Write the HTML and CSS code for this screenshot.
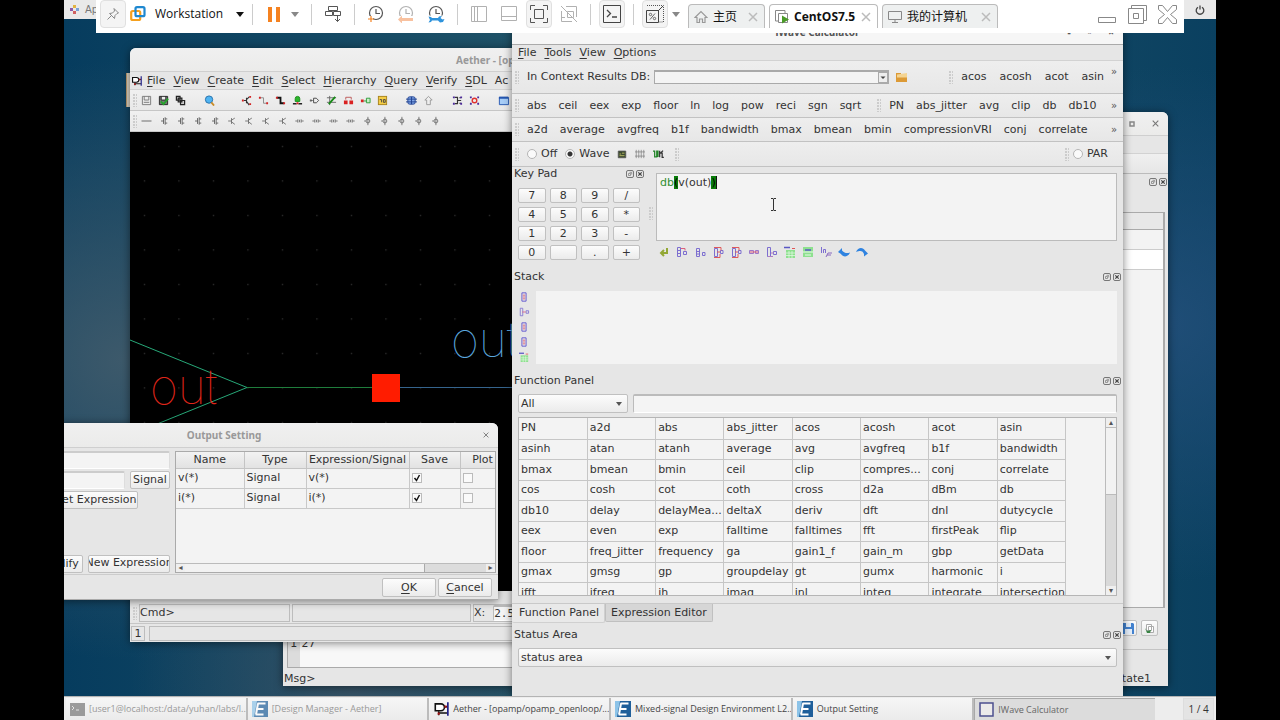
FILE: index.html
```
<!DOCTYPE html>
<html lang="en">
<head>
    <meta charset="UTF-8">
    <meta name="viewport" content="width=device-width, initial-scale=1.0">
    <title>CentOS7.5 - Workstation</title>
    <link rel="stylesheet" href="styles.css">
</head>
<body>
    <!-- shared icons -->
    <svg class="sprite" aria-hidden="true">
        <symbol id="caret" viewBox="0 0 8 5"><path d="M0 0h8L4 5z" fill="currentColor"/></symbol>
        <symbol id="float" viewBox="0 0 8 8"><rect x=".5" y=".5" width="7" height="7" rx="1.5" fill="none" stroke="#777"/><path d="M2.500 3.500h2v2h-2zM3.500 2.300h2.200v2.200" fill="none" stroke="#777" stroke-width=".7"/></symbol>
        <symbol id="shut" viewBox="0 0 8 8"><rect x=".5" y=".5" width="7" height="7" rx="1.5" fill="none" stroke="#777"/><path d="M2.300 2.300l3.400 3.400M5.700 2.300L2.300 5.700" stroke="#444" stroke-width="1.200"/></symbol>
        <symbol id="cross" viewBox="0 0 10 10"><path d="M1 1l8 8M9 1L1 9" stroke="currentColor" stroke-width="1.500"/></symbol>
        <symbol id="clock" viewBox="0 0 18 18"><circle cx="9" cy="8" r="6.500" fill="none" stroke="currentColor" stroke-width="1.200"/><path d="M9 4v4.500h4" fill="none" stroke="currentColor" stroke-width="1.200"/></symbol>
        <symbol id="aether" viewBox="0 0 14 12"><path d="M2 1.500h5a3 3 0 0 1 0 6H2z" fill="#fff" stroke="#111" stroke-width="1.400"/><path d="M10 4h3M5 9.500h8M5 8v3.500" stroke="#111" stroke-width="1.200"/><path d="M13 0v12" stroke="#22228a" stroke-width="1.500"/><path d="M10 3h2v2h-2zM4 9h2v2H4z" fill="#a31616"/></symbol>
        <symbol id="empyrean" viewBox="0 0 16 16"><rect width="16" height="16" fill="#1f5f9a"/><path d="M0 0h5L2 16H0z" fill="#8cc3e8"/><path d="M5.500 2.500h8M4.500 8h7M3.500 13.500h8M6 2.500l-2 11" stroke="#fff" stroke-width="2" fill="none"/></symbol>
        <symbol id="mos" viewBox="0 0 12 12"><path d="M3 6h3M6 2.500v7M8 1.500v9M8 3.500h2.500M8 8.500h2.500" fill="none" stroke="#555"/></symbol>
        <symbol id="bjt" viewBox="0 0 12 12"><path d="M2 6h4M6 2.500v7M6 5l4-2.500M6 7l4 3" fill="none" stroke="#666"/></symbol>
        <symbol id="res" viewBox="0 0 12 12"><path d="M1 6h3M8 6h3M4 4v4M6 4.500v3M8 4v4" stroke="#666" fill="none"/></symbol>
        <symbol id="src" viewBox="0 0 12 12"><circle cx="6.500" cy="6" r="2.300" fill="none" stroke="#666"/><path d="M6.500 1v10M2 6h2" stroke="#666"/></symbol>
        <symbol id="wire" viewBox="0 0 12 12"><path d="M2 3h4v6h4" fill="none" stroke="#888"/><path d="M1 2h2v2H1zM9 8h2v2H9z" fill="#d32222"/></symbol>
        <symbol id="stk1" viewBox="0 0 12 12"><path d="M1.500 1.500h3v9h-3zM2 4.500h2M2 7.500h2M7.500 5.500h3v3h-3z" fill="none" stroke="#7d6fd0"/><path d="M5 2.500h4v2" fill="none" stroke="#dc5f7c"/></symbol>
        <symbol id="stk2" viewBox="0 0 12 12"><path d="M2.500 2.500h3v8h-3zM3 5.500h2M3 8h2M8.500 6.500h2.500v3H8.500z" fill="none" stroke="#7d6fd0"/></symbol>
        <symbol id="stk3" viewBox="0 0 12 12"><path d="M2.500 2.500h3v8h-3zM8.500 4.500h2.500v3H8.500z" fill="none" stroke="#7d6fd0"/><path d="M2 1.500h7v3M2 11.500h6V8M5 6h3" fill="none" stroke="#df5a5a"/></symbol>
        <symbol id="stk4" viewBox="0 0 12 12"><path d="M3.500 1h5v10h-5z" fill="none" stroke="#6a5fd0" stroke-width="1.200"/><path d="M6 2.500v7M4.500 4.500h3M4.500 7.500h3" stroke="#e08090" fill="none"/></symbol>
        <symbol id="calc" viewBox="0 0 12 12"><path d="M2 4h9v8H2z" fill="#8ee08f"/><path d="M2 7h9M2 9.500h9M5 5v7M8 5v7" stroke="#e8fbe8" stroke-width=".7"/><path d="M0 1.500h6" stroke="#5a57c4" stroke-width="1.500"/><path d="M8 2.500h3" stroke="#e05555"/></symbol>
        <symbol id="home" viewBox="0 0 14 14"><path d="M1 7.500L7 1.500l6 6h-2v5H8.500V9h-3v3.500H3v-5z" fill="none" stroke="#999" stroke-width="1.200"/></symbol>
    </svg>

    <main class="desktop">
        <header class="gnome-bar">
            <span class="gnome-apps">
                <svg width="9" height="9" viewBox="0 0 9 9"><path d="M0 3h3v3H0z" fill="#8d5aa8"/><path d="M3 0h3v3H3z" fill="#e3b341"/><path d="M6 3h3v3H6z" fill="#7ba3d8"/><path d="M3 6h3v3H3z" fill="#d06060"/></svg>
                Ap
            </span>
            <svg width="10" height="10" viewBox="0 0 10 10"><path d="M3 2.200a3.800 3.800 0 1 0 4 0M5 .500v4" fill="none" stroke="#444" stroke-width="1.300"/></svg>
        </header>

        <!-- mixed-signal environment, mostly covered -->
        <section class="window mde">
            <div class="titlebar">
                <svg width="6" height="6" viewBox="0 0 6 6"><path d="M1 1h4v4H1z" fill="none" stroke="#888" stroke-width="1.500"/></svg>
                <svg class="muted" width="7" height="7"><use href="#cross"/></svg>
            </div>
            <div class="mde-menu"></div>
            <div class="mde-tools"></div>
            <div class="mde-main">
                <div class="mde-left">
                    <table class="mde-rows">
                        <tr><th>1</th><td>27</td></tr>
                        <tr><th></th><td></td></tr>
                    </table>
                </div>
                <div class="mde-right">
                    <div class="dock-buttons"><svg width="8" height="8"><use href="#float"/></svg><svg width="8" height="8"><use href="#shut"/></svg></div>
                    <div class="mde-list"><div class="list-head"></div><div class="list-row"></div><div class="list-row white"></div></div>
                    <div class="mde-actions">
                        <button aria-label="Save state"><svg width="11" height="11" viewBox="0 0 11 11"><path d="M0 0h10l1 1v10H0z" fill="#4382cf"/><path d="M3 0h5v4H3zM2 6h7v5H2z" fill="#e4eefa"/></svg></button>
                        <button aria-label="Load state"><svg width="11" height="11" viewBox="0 0 11 11"><path d="M2.500 1.500h5v6h-5zM4.500 3.500h5v6h-5z" fill="#fff" stroke="#aaa"/><path d="M1 5l2 3 4-1-1 3H3z" fill="#398345"/></svg></button>
                    </div>
                </div>
            </div>
            <footer class="mde-status"><span>Msg&gt;</span><span>state1</span></footer>
        </section>

        <div class="sliver"></div>

        <section class="window aether">
            <div class="titlebar"><span>Aether - [opamp</span></div>
            <nav class="menubar">
                <svg width="11" height="10"><use href="#aether"/></svg>
                <span><u>F</u>ile</span><span><u>V</u>iew</span><span><u>C</u>reate</span><span><u>E</u>dit</span><span><u>S</u>elect</span><span><u>H</u>ierarchy</span><span><u>Q</u>uery</span><span><u>V</u>erify</span><span><u>S</u>DL</span><span>Ac</span>
            </nav>
            <div class="toolbar">
                <i class="grip"></i>
                <div class="icons">
                    <svg viewBox="0 0 12 12"><path d="M1.500 1.500h9v9h-9zM3.500 1.500v4h5v-4M3 8h6" fill="none" stroke="#777"/></svg>
                    <svg viewBox="0 0 12 12"><path d="M1.500 1.500h9v9h-9zM3.500 1.500v4h5v-4" fill="#777" stroke="#222"/><path d="M3 7l3 3 5-6" fill="none" stroke="#25a32b" stroke-width="2"/></svg>
                    <svg viewBox="0 0 12 12"><path d="M1.500 1.500h4v4h-4zM3.500 3.500h4v4h-4zM6 6h4.500v4.500H6z" fill="#ccc" stroke="#222" stroke-width="1.300"/></svg>
                </div>
                <div class="icons">
                    <svg viewBox="0 0 12 12"><circle cx="5.500" cy="5" r="4" fill="#50b4f2" stroke="#236da8"/><path d="M8 8l3 3.500" stroke="#c98c28" stroke-width="2"/></svg>
                </div>
                <div class="icons wide">
                    <svg viewBox="0 0 12 12"><path d="M3 6h3M6 3v6M6 5l3-3M6 7l3 4" fill="none" stroke="#333" stroke-width="1.200"/><path d="M1 5h2v2H1zM9 1h2v2H9zM9 9h2v2H9z" fill="#d32222"/></svg>
                    <svg><use href="#wire"/></svg>
                    <svg viewBox="0 0 12 12"><path d="M2 3h4v6h4" fill="none" stroke="#111" stroke-width="2"/><path d="M1 2h2v2H1zM9 8h2v2H9z" fill="#d32222"/></svg>
                    <svg viewBox="0 0 12 12"><path d="M3.500 7V4a2.500 2.500 0 0 1 5 0v3z" fill="#2bb52b" stroke="#178a17"/><path d="M1 9.500h4M7 9.500h4" stroke="#222" stroke-width="1.500"/><path d="M5 8h2v2H5z" fill="#d22"/></svg>
                    <svg viewBox="0 0 12 12"><path d="M1 6h3M5 3.500h3l2.500 2.500L8 8.500H5z" fill="none" stroke="#444"/><path d="M1 5h2v2H1z" fill="#666"/></svg>
                    <svg viewBox="0 0 12 12"><path d="M1 3h10M1 8h10M4 1v10" stroke="#666"/><path d="M10 2L3 10" stroke="#178a17" stroke-width="2"/></svg>
                    <svg viewBox="0 0 12 12"><path d="M3 5V2.500h6V5" fill="none" stroke="#b55"/><path d="M1 6h4v4H1zM7 6h4v4H7z" fill="#d92121"/></svg>
                    <svg viewBox="0 0 12 12"><path d="M1 5h3v3H1z" fill="#d92121"/><path d="M4 6.500h3M7 3.500h4v5H7z" fill="#c9eec9" stroke="#2b9a37"/></svg>
                    <svg viewBox="0 0 12 12"><rect x="1.500" y="1.500" width="9" height="9" fill="#f5cd46" stroke="#a78218"/><path d="M3 5h2v3M7 5h2v3H7z" stroke="#444" fill="none"/></svg>
                </div>
                <div class="icons">
                    <svg viewBox="0 0 12 12"><rect x="2" y="2" width="8" height="8" rx="2" fill="#7fa5e6" stroke="#20418f"/><path d="M0 4.500h12M0 7.500h12M6 2v8" stroke="#20418f"/></svg>
                    <svg viewBox="0 0 12 12"><path d="M6 1.500l4 4H8v5H4v-5H2z" fill="#eee" stroke="#999"/></svg>
                </div>
                <div class="icons">
                    <svg viewBox="0 0 12 12"><path d="M3 2.500h3v7H3M6 6h4M8 3h2M8 9h2" fill="none" stroke="#333" stroke-width="1.300"/><path d="M1 1.500h2v2H1zM1 8.500h2v2H1zM9 1.500h2v2H9zM9 8.500h2v2H9z" fill="#4d2a9c"/></svg>
                    <svg viewBox="0 0 12 12"><circle cx="6" cy="6" r="2.500" fill="none" stroke="#e03030" stroke-width="1.500"/><path d="M1 1.500h2v2H1zM1 8.500h2v2H1zM9 1.500h2v2H9zM9 8.500h2v2H9z" fill="#4d2a9c"/></svg>
                </div>
                <div class="icons">
                    <svg viewBox="0 0 12 12"><path d="M1.500 2.500h10v8h-10z" fill="#a7cdf7" stroke="#2456b0"/><path d="M1 3h10" stroke="#2456b0" stroke-width="2"/></svg>
                </div>
            </div>
            <div class="toolbar devices">
                <i class="grip"></i>
                <div class="icons">
                    <svg viewBox="0 0 12 12"><path d="M0 6h12" stroke="#555"/></svg>
                    <svg><use href="#mos"/></svg><svg><use href="#mos"/></svg><svg><use href="#mos"/></svg><svg><use href="#mos"/></svg>
                    <svg><use href="#bjt"/></svg><svg><use href="#bjt"/></svg><svg><use href="#bjt"/></svg><svg><use href="#bjt"/></svg>
                    <svg><use href="#res"/></svg><svg><use href="#res"/></svg><svg><use href="#res"/></svg><svg><use href="#res"/></svg>
                    <svg><use href="#src"/></svg><svg><use href="#src"/></svg><svg><use href="#src"/></svg><svg><use href="#src"/></svg><svg><use href="#src"/></svg>
                </div>
            </div>
            <svg class="schematic">
                <defs>
                    <pattern id="dots" width="34.5" height="34.5" patternUnits="userSpaceOnUse"><rect x="14" y="14" width="1" height="1" fill="#555"/></pattern>
                </defs>
                <rect width="100%" height="100%" fill="url(#dots)"/>
                <path d="M0 208L117 255.500L0 303" fill="none" stroke="#27a878"/>
                <path d="M117 255.500h126" stroke="#1f7d3c"/>
                <path d="M270 255.500h200" stroke="#35648d"/>
                <rect x="242" y="242" width="28" height="28" fill="#ff1c00"/>
                <text x="20" y="272" fill="#e0261a">out</text>
                <text x="321" y="225" fill="#5aa5dc">out</text>
            </svg>
            <div class="cmd-row">
                <i class="grip"></i>
                <div class="cell cmd">Cmd&gt;</div>
                <div class="cell info"></div>
                <div class="cell coords"><label for="coordX">X:</label><input id="coordX" type="text" value="2.5"></div>
            </div>
            <div class="state-row"><div class="cell num">1</div><div class="cell rest"></div></div>
        </section>

        <section class="window output">
            <div class="titlebar"><span>Output Setting</span><svg class="muted" width="6" height="6"><use href="#cross"/></svg></div>
            <div class="output-body">
                <form class="output-form">
                    <input type="text" aria-label="Output name">
                    <div class="form-line"><input type="text" aria-label="Output signal"><button type="button" class="btn signal">Signal</button></div>
                    <button type="button" class="btn get">Get Expression</button>
                    <div class="form-line last"><button type="button" class="btn modify">Modify</button><button type="button" class="btn new"><span>New Expression</span></button></div>
                </form>
                <div class="output-list">
                    <table>
                        <colgroup><col class="c-name"><col class="c-type"><col class="c-expr"><col class="c-save"><col class="c-plot"></colgroup>
                        <tr><th>Name</th><th>Type</th><th>Expression/Signal</th><th>Save</th><th>Plot</th></tr>
                        <tr><td>v(*)</td><td>Signal</td><td>v(*)</td><td><input type="checkbox" aria-label="Save v(*)" checked></td><td><input type="checkbox" aria-label="Plot v(*)"></td></tr>
                        <tr><td>i(*)</td><td>Signal</td><td>i(*)</td><td><input type="checkbox" aria-label="Save i(*)" checked></td><td><input type="checkbox" aria-label="Plot i(*)"></td></tr>
                    </table>
                    <div class="hscroll"><b>◂</b><i></i><b>▸</b></div>
                </div>
            </div>
            <div class="output-actions"><button class="btn"><u>O</u>K</button><button class="btn"><u>C</u>ancel</button></div>
        </section>

        <section class="window iwave">
            <div class="titlebar"><span>iWave Calculator</span><div class="win-buttons"><i>-</i><i>▫</i><i>×</i></div></div>
            <nav class="menubar"><span><u>F</u>ile</span><span><u>T</u>ools</span><span><u>V</u>iew</span><span><u>O</u>ptions</span></nav>

            <div class="bar bar-db">
                <i class="grip"></i>
                <label for="resultsDb">In Context Results DB:</label>
                <select id="resultsDb"><option></option></select>
                <svg width="11" height="10" viewBox="0 0 11 10"><path d="M0 1h5v1h6v8H0z" fill="#dc9a36"/><path d="M1 2.500l10-1.500v4.500H1z" fill="#f4d492"/></svg>
                <i class="grip far"></i>
                <div class="fns"><span>acos</span><span>acosh</span><span>acot</span><span>asin</span></div>
                <b class="more up">»</b>
            </div>
            <div class="bar bar-math">
                <i class="grip"></i>
                <div class="fns"><span>abs</span><span>ceil</span><span>eex</span><span>exp</span><span>floor</span><span>ln</span><span>log</span><span>pow</span><span>reci</span><span>sgn</span><span>sqrt</span></div>
                <i class="grip"></i>
                <div class="fns"><span>PN</span><span>abs_jitter</span><span>avg</span><span>clip</span><span>db</span><span>db10</span></div>
                <b class="more">»</b>
            </div>
            <div class="bar bar-math">
                <i class="grip"></i>
                <div class="fns"><span>a2d</span><span>average</span><span>avgfreq</span><span>b1f</span><span>bandwidth</span><span>bmax</span><span>bmean</span><span>bmin</span><span>compressionVRI</span><span>conj</span><span>correlate</span></div>
                <b class="more">»</b>
            </div>
            <div class="bar bar-mode">
                <i class="grip"></i>
                <label><input type="radio" name="mode">Off</label>
                <label><input type="radio" name="mode" checked>Wave</label>
                <div class="icons mode-icons">
                    <svg viewBox="0 0 12 12"><path d="M1.500 2.500h9v8h-9z" fill="#3b4a30" stroke="#555"/><path d="M3 6h2M6 5h3M3 8h6" stroke="#c9c66b"/></svg>
                    <svg viewBox="0 0 12 12"><path d="M0 3.500h12M0 8.500h12M1.500 1v10M4.500 1v10M7.500 1v10M10.500 1v10" stroke="#777" stroke-width=".8"/></svg>
                    <svg viewBox="0 0 12 12"><path d="M0 2.500h2v7h2.500v-7H6v7" fill="none" stroke="#24852a" stroke-width="1.500"/><path d="M8 2v8M12 2l-3 3h2v5h2" fill="none" stroke="#333" stroke-width="1.500"/></svg>
                </div>
                <i class="grip"></i>
                <span class="grow"></span>
                <i class="grip"></i>
                <label><input type="radio" name="par">PAR</label>
            </div>

            <div class="calc-main">
                <div class="keypad">
                    <div class="dock-title"><span>Key Pad</span><svg width="8" height="8"><use href="#float"/></svg><svg width="8" height="8"><use href="#shut"/></svg></div>
                    <div class="keys">
                        <button>7</button><button>8</button><button>9</button><button>/</button>
                        <button>4</button><button>5</button><button>6</button><button>*</button>
                        <button>1</button><button>2</button><button>3</button><button>-</button>
                        <button>0</button><button aria-label="blank"></button><button>.</button><button>+</button>
                    </div>
                </div>
                <i class="grip splitter"></i>
                <div class="editor">
                    <div class="expression" role="textbox" contenteditable="true" aria-label="Expression" spellcheck="false"><span class="fn">db</span><span class="paren">(</span>v(out)<span class="paren caret-end">)</span></div>
                    <svg class="ibeam" width="7" height="13" viewBox="0 0 7 13"><path d="M1 .500h2l.5.500.5-.500h2M3.500 1v11M1 12.500h2l.5-.500.5.500h2" fill="none" stroke="#333"/></svg>
                    <div class="icons edit-icons">
                        <svg viewBox="0 0 12 12"><path d="M9 2v5H4M6 4L3 7l3 3" fill="none" stroke="#93a835" stroke-width="2"/></svg>
                        <svg><use href="#stk1"/></svg>
                        <svg><use href="#stk2"/></svg>
                        <svg><use href="#stk3"/></svg>
                        <svg><use href="#stk3"/></svg>
                        <svg viewBox="0 0 12 12"><path d="M1.500 4.500h4v3h-4zM7.500 4.500h3v3h-3z" fill="none" stroke="#9c7ac9"/><path d="M2 6h8" stroke="#dc5f7c"/></svg>
                        <svg viewBox="0 0 12 12"><path d="M1.500 1.500h3v9h-3zM7.500 5.500h3v3h-3z" fill="none" stroke="#7d6fd0"/><path d="M2 10.500h5M5 7h3" stroke="#b07cc0"/></svg>
                        <svg><use href="#calc"/></svg>
                        <svg viewBox="0 0 12 12"><path d="M1 1h10v10H1z" fill="#8ee08f"/><path d="M1 6h10M3 9h6" stroke="#e8fbe8"/><path d="M3 4h6" stroke="#5a57c4" stroke-width="1.500"/></svg>
                        <svg viewBox="0 0 12 12"><path d="M1.500 1v6M3.500 7V3.500h2V7" fill="none" stroke="#7d6fd0"/><path d="M6 11l2-4h4M7 9h4" stroke="#8a6ac0" fill="none"/></svg>
                        <svg viewBox="0 0 12 12"><path d="M0 6l4-4v2.500c3 3 5 3 8 2-2 5-7 5-9 1.500z" fill="#2f83e0"/></svg>
                        <svg viewBox="0 0 12 12"><path d="M12 7.500l-4 3V8C6 4 4 5 0 6c2-5 7-5 9-1.500z" fill="#2f83e0"/></svg>
                    </div>
                </div>
            </div>

            <div class="dock-title stack-title"><span>Stack</span><svg width="8" height="8"><use href="#float"/></svg><svg width="8" height="8"><use href="#shut"/></svg></div>
            <div class="stack">
                <div class="stack-icons">
                    <svg><use href="#stk4"/></svg>
                    <svg viewBox="0 0 12 12"><path d="M1.500 1.500h3v9h-3zM8.500 4.500h3v3h-3z" fill="none" stroke="#7d6fd0"/><path d="M4 6h4" stroke="#dc5f7c"/></svg>
                    <svg><use href="#stk4"/></svg>
                    <svg><use href="#stk4"/></svg>
                    <svg><use href="#calc"/></svg>
                </div>
                <div class="stack-list"></div>
            </div>

            <div class="dock-title fn-title"><span>Function Panel</span><svg width="8" height="8"><use href="#float"/></svg><svg width="8" height="8"><use href="#shut"/></svg></div>
            <div class="fn-filter">
                <select class="combo" aria-label="Category"><option>All</option></select>
                <input type="text" aria-label="Filter functions">
            </div>
            <div class="fn-panel">
                <div class="fn-scroll">
                    <table>
                        <tr><td>PN</td><td>a2d</td><td>abs</td><td>abs_jitter</td><td>acos</td><td>acosh</td><td>acot</td><td>asin</td></tr>
                        <tr><td>asinh</td><td>atan</td><td>atanh</td><td>average</td><td>avg</td><td>avgfreq</td><td>b1f</td><td>bandwidth</td></tr>
                        <tr><td>bmax</td><td>bmean</td><td>bmin</td><td>ceil</td><td>clip</td><td>compres...</td><td>conj</td><td>correlate</td></tr>
                        <tr><td>cos</td><td>cosh</td><td>cot</td><td>coth</td><td>cross</td><td>d2a</td><td>dBm</td><td>db</td></tr>
                        <tr><td>db10</td><td>delay</td><td>delayMea...</td><td>deltaX</td><td>deriv</td><td>dft</td><td>dnl</td><td>dutycycle</td></tr>
                        <tr><td>eex</td><td>even</td><td>exp</td><td>falltime</td><td>falltimes</td><td>fft</td><td>firstPeak</td><td>flip</td></tr>
                        <tr><td>floor</td><td>freq_jitter</td><td>frequency</td><td>ga</td><td>gain1_f</td><td>gain_m</td><td>gbp</td><td>getData</td></tr>
                        <tr><td>gmax</td><td>gmsg</td><td>gp</td><td>groupdelay</td><td>gt</td><td>gumx</td><td>harmonic</td><td>i</td></tr>
                        <tr><td>ifft</td><td>ifreq</td><td>ih</td><td>imag</td><td>inl</td><td>integ</td><td>integrate</td><td>intersection</td></tr>
                    </table>
                </div>
                <div class="vscroll"><b>▴</b><i></i><b>▾</b></div>
            </div>
            <div class="tabs"><button class="active">Function Panel</button><button>Expression Editor</button></div>

            <div class="dock-title status-title"><span>Status Area</span><svg width="8" height="8"><use href="#float"/></svg><svg width="8" height="8"><use href="#shut"/></svg></div>
            <div class="status-area"><select class="combo" aria-label="Status"><option>status area</option></select></div>
        </section>

        <!-- full screen toolbar of the host -->
        <header class="vm-bar">
            <button class="tool on" aria-label="Pin"><svg width="14" height="14" viewBox="0 0 14 14"><path d="M8 1.500l4.500 4.500-1.500.500-2 2-.500 3-5-5 3-.500 2-2zM5.500 8.500L1.500 12.500" fill="none" stroke="#888"/></svg></button>
            <svg class="vm-logo" viewBox="0 0 16 16"><rect x="1.200" y="5" width="9" height="9" rx="1.500" fill="none" stroke="#f5a01d" stroke-width="2.200"/><rect x="5.500" y="1.200" width="9" height="9" rx="1.500" fill="none" stroke="#1e88d0" stroke-width="2.200"/></svg>
            <button class="vm-name">Workstation<svg width="8" height="5"><use href="#caret"/></svg></button>
            <i class="sep"></i>
            <button class="tool" aria-label="Suspend"><svg width="12" height="15" viewBox="0 0 12 15"><path d="M0 0h4v15H0zM8 0h4v15H8z" fill="#f58220"/></svg></button>
            <span class="drop"><svg width="8" height="5"><use href="#caret"/></svg></span>
            <i class="sep"></i>
            <button class="tool" aria-label="Send keys"><svg width="18" height="18" viewBox="0 0 18 18"><path d="M4.500 1.500h9v4h-9zM1.500 6.500h7v4h-7zM9.500 6.500h7v4h-7zM13.500 10.500v6M11 14l2.500 2.500L16 14" fill="none" stroke="#555"/></svg></button>
            <i class="sep"></i>
            <button class="tool" aria-label="Take snapshot"><svg width="18" height="18" viewBox="0 0 18 18"><use href="#clock"/><path d="M0 11h6v7H0z" fill="#fff"/><path d="M4 11v6M1 14h6" stroke="#f58220" stroke-width="1.200"/></svg></button>
            <button class="tool" aria-label="Revert snapshot"><svg class="faded" width="18" height="18" viewBox="0 0 18 18"><use href="#clock"/><path d="M2 11h15v6H2z" fill="#fff"/><path d="M5 10.500v2.500h11v3H5v2.500l-4-4z" fill="#f0772c"/></svg></button>
            <button class="tool" aria-label="Manage snapshots"><svg width="18" height="18" viewBox="0 0 18 18"><use href="#clock"/><path d="M1 10.500h16V18H1z" fill="#fff"/><path d="M1.500 11.500l2.500.500 1 1h6l1-1.500 3-.500-1.500 2 2 1.500 2-.500-1.500 3-3 .500-2-2H5l-1 1.500-2.500.500 1.500-2.500z" fill="#2e93dc"/></svg></button>
            <i class="sep"></i>
            <button class="tool" aria-label="Library"><svg class="faded" width="16" height="16" viewBox="0 0 16 16"><path d="M.500.500h15v15H.500zM6.500.500v15M3.500.500v15" fill="none" stroke="currentColor"/></svg></button>
            <button class="tool" aria-label="Thumbnails"><svg class="faded" width="16" height="16" viewBox="0 0 16 16"><path d="M.500.500h15v14H.500zM.500 10.500h15" fill="none" stroke="currentColor"/></svg></button>
            <button class="tool on" aria-label="Full screen"><svg width="18" height="18" viewBox="0 0 18 18"><path d="M4.500 4.500h9v9h-9zM.500 5V.500H5M13 .500h4.500V5M17.500 13v4.500H13M5 17.500H.500V13" fill="none" stroke="#555"/></svg></button>
            <button class="tool" aria-label="Unity"><svg class="faded" width="16" height="16" viewBox="0 0 16 16"><path d="M5 .500h10.500V11M.500 5v10.500H11M4 11.500H.500M6.500 5.500h6v6h-6zM0 0l16 16" fill="none" stroke="currentColor"/></svg></button>
            <i class="sep"></i>
            <button class="tool on" aria-label="Console view"><svg width="18" height="18" viewBox="0 0 18 18"><path d="M.500.500h17v17H.500z" fill="none" stroke="#444"/><path d="M4 5l3.500 3.500L4 12M9 12h5" fill="none" stroke="#444" stroke-width="1.300"/></svg></button>
            <i class="sep"></i>
            <button class="tool on" aria-label="Stretch guest"><svg width="18" height="18" viewBox="0 0 18 18"><path d="M.500 5.500h12v12H.500z" fill="none" stroke="#444"/><path d="M1 .500h16.500V17H13" fill="none" stroke="#555" stroke-dasharray="1 1"/><path d="M12 6l5-5" stroke="#444"/><circle cx="4.500" cy="9.500" r="1.200" fill="none" stroke="#666"/><circle cx="8.500" cy="13.500" r="1.200" fill="none" stroke="#666"/><path d="M9 8.500l-5 6" stroke="#666"/></svg></button>
            <span class="drop"><svg width="8" height="5"><use href="#caret"/></svg></span>
            <div class="vm-tabs">
                <button class="vm-tab"><svg width="14" height="14"><use href="#home"/></svg><span lang="zh">主页</span><svg class="x" width="10" height="10"><use href="#cross"/></svg></button>
                <button class="vm-tab current"><svg width="14" height="14" viewBox="0 0 14 14"><path d="M3.500 11H.500V.500H10V3M3.500 3.500h9v9h-9z" fill="none" stroke="#888"/><path d="M7 5.500l7 4-7 4z" fill="#4a9a28"/></svg><span>CentOS7.5</span><svg class="x" width="10" height="10"><use href="#cross"/></svg></button>
                <button class="vm-tab"><svg width="14" height="12" viewBox="0 0 14 12"><path d="M.500.500h13v8H.500zM7 9v2M4 11.500h6" fill="none" stroke="#888"/></svg><span lang="zh">我的计算机</span><svg class="x" width="10" height="10"><use href="#cross"/></svg></button>
            </div>
            <div class="vm-window">
                <button aria-label="Minimize"><svg width="19" height="19" viewBox="0 0 19 19"><path d="M.500 12.500h17v5H.500z" fill="none" stroke="#888"/></svg></button>
                <button aria-label="Restore"><svg width="19" height="19" viewBox="0 0 19 19"><path d="M3.500 3V.500h15v15H16M.500 3.500h15v15H.500zM5.500 8.500h5v5h-5z" fill="none" stroke="#888"/></svg></button>
                <button aria-label="Close"><svg width="19" height="19" viewBox="0 0 19 19"><path d="M.500.500h4l5 6 5-6h4v4l-6 5 6 5v4h-4l-5-6-5 6h-4v-4l6-5-6-5z" fill="none" stroke="#888"/></svg></button>
            </div>
        </header>

        <footer class="taskbar">
            <button class="task dim"><svg width="15" height="13" viewBox="0 0 15 13"><path d="M0 0h15v13H0z" fill="#777"/><path d="M2 3l2 2-2 2M6 7h3" fill="none" stroke="#ddd"/></svg>[user1@localhost:/data/yuhan/labs/l...</button>
            <button class="task dim"><svg width="16" height="16"><use href="#empyrean"/></svg>[Design Manager - Aether]</button>
            <button class="task"><svg width="16" height="14"><use href="#aether"/></svg>Aether - [opamp/opamp_openloop/...</button>
            <button class="task"><svg width="16" height="16"><use href="#empyrean"/></svg>Mixed-signal Design Environment L2...</button>
            <button class="task"><svg width="16" height="16"><use href="#empyrean"/></svg>Output Setting</button>
            <button class="task pressed"><svg width="15" height="15" viewBox="0 0 15 15"><rect x="1" y="1" width="13" height="13" fill="#eceaea" stroke="#4c4f8e" stroke-width="1.500"/></svg>IWave Calculator</button>
            <span class="pager">1 / 4</span>
        </footer>
    </main>
</body>
</html>
```
FILE: styles.css
```
* {
    box-sizing: border-box;
}

body {
    margin: 0;
    padding: 0 5%;
    height: 100vh;
    overflow: hidden;
    background: #000;
    color: #333;
    font-family: "DejaVu Sans", sans-serif;
    font-size: 11px;
    line-height: 14px;
}

button, input, select {
    font: inherit;
    color: inherit;
    margin: 0;
    padding: 0;
}

i {
    font-style: normal;
}

svg {
    flex: none;
}

u {
    text-underline-offset: 2px;
}

.sprite {
    position: absolute;
    width: 0;
    height: 0;
}

.desktop {
    position: relative;
    height: 100%;
    overflow: hidden;
    background:
        radial-gradient(circle at 5% 50%, rgba(66, 92, 108, 0.9), transparent 26%),
        radial-gradient(circle at 25% 95%, rgba(66, 84, 100, 0.7), transparent 20%),
        radial-gradient(circle at 96% 45%, rgba(36, 80, 124, 0.8), transparent 22%),
        linear-gradient(90deg, #063c5e, #26586a 50%, #0a4060);
}

/* guest desktop bars */

.gnome-bar {
    display: flex;
    align-items: center;
    justify-content: space-between;
    height: 19px;
    padding: 0 11px 0 6px;
    background: #e9e9e9;
    color: #777;
    font-size: 10px;
}

.gnome-apps {
    display: flex;
    align-items: center;
    gap: 6px;
}

.taskbar {
    position: absolute;
    left: 0;
    right: 0;
    bottom: 0;
    display: flex;
    height: 24px;
    padding: 1px 2px 0;
    border-top: 1px solid #b4b4b4;
    background: #ededed;
    font-family: "Open Sans", sans-serif;
    font-size: 9px;
}

.task {
    flex: 1;
    display: flex;
    align-items: center;
    gap: 4px;
    min-width: 0;
    padding-left: 4px;
    overflow: hidden;
    white-space: nowrap;
    border: 0;
    border-right: 2px solid #bcbcbc;
    background: linear-gradient(#f6f6f6, #ebebeb);
    color: #444;
}

.task.dim {
    color: #999;
}

.task.dim svg {
    opacity: 0.7;
}

.task.pressed {
    border: 1px solid #a8a8a8;
    border-width: 1px 0 0 1px;
    background: #dcdcdc;
    color: #666;
}

.pager {
    width: 31px;
    margin-left: 28px;
    border: 1px solid #ddd;
    background: #e4e4e4;
    font-size: 10px;
    line-height: 20px;
    text-align: center;
}

/* windows */

.window {
    position: absolute;
    display: flex;
    flex-direction: column;
    overflow: hidden;
    border-radius: 6px 6px 0 0;
    background: #e6e6e6;
    box-shadow: 0 1px 8px rgba(0, 0, 0, 0.5);
}

.titlebar {
    display: flex;
    align-items: center;
    justify-content: center;
    height: 24px;
    flex: none;
    border-bottom: 1px solid #cfcfcf;
    background: linear-gradient(#f0f0f0, #ebebea);
    color: #999;
    font-family: "Noto Sans", sans-serif;
    font-size: 10px;
    font-weight: bold;
}

.muted {
    color: #777;
}

.menubar {
    display: flex;
    align-items: center;
    gap: 8px;
    flex: none;
    border-bottom: 1px solid #d2d2d2;
}

.grip {
    width: 4px;
    height: 13px;
    flex: none;
    background: radial-gradient(circle at 1px 1px, #ccc 1px, transparent 1px);
    background-size: 3px 3px;
}

.icons {
    display: flex;
    flex: none;
}

.icons svg {
    width: 17px;
    height: 11px;
}

.btn, .keys button, .combo, .mde-actions button {
    border: 1px solid #c0c0c0;
    border-radius: 2px;
    background: linear-gradient(#fcfcfc, #ebebeb);
}

input[type="text"] {
    border: 1px solid #bbb;
    border-top-width: 2px;
    border-bottom-color: #fff;
    border-radius: 2px;
    background: #f4f4f4;
}

.dock-title {
    display: flex;
    align-items: center;
    gap: 2px;
    flex: none;
    height: 14px;
    padding: 0 2px;
}

.dock-title span {
    flex: 1;
}

/* mixed-signal environment */

.mde {
    left: 219px;
    right: 48px;
    top: 112px;
    bottom: 34px;
}

.mde .titlebar {
    justify-content: flex-end;
    gap: 17px;
    padding-right: 9px;
}

.mde-menu {
    height: 18px;
    border-bottom: 1px solid #d2d2d2;
}

.mde-tools {
    height: 20px;
    border-bottom: 1px solid #bbb;
    background: linear-gradient(#f0f0f0, #e6e6e6);
}

.mde-main {
    flex: 1;
    display: flex;
}

.mde-left {
    flex: 1;
    display: flex;
    flex-direction: column;
    justify-content: flex-end;
    padding: 0 3px 0 4px;
}

.mde-rows {
    width: 100%;
    border: 1px solid #aaa;
    border-collapse: collapse;
    background: #f8f8f8;
    text-align: left;
}

.mde-rows th {
    width: 12px;
    padding: 0;
    background: #dcdcdc;
    font-weight: normal;
    text-align: center;
}

.mde-rows td {
    height: 16px;
    padding: 0 2px;
}

.mde-right {
    width: 180px;
    display: flex;
    flex-direction: column;
    margin-bottom: 18px;
    border-bottom: 1px solid #c4c4c4;
}

.dock-buttons {
    display: flex;
    justify-content: flex-end;
    gap: 2px;
    padding: 4px 1px 26px;
}

.mde-list {
    flex: 1;
    margin-right: 3px;
    border: 1px solid #aaa;
    border-width: 1px 2px 1px 1px;
    background: #f3f3f3;
}

.list-head {
    height: 17px;
    border-bottom: 1px solid #aaa;
    background: #e8e8e8;
}

.list-row {
    height: 20px;
    border-bottom: 1px solid #ccc;
}

.list-row.white {
    background: #fff;
}

.mde-actions {
    display: flex;
    justify-content: flex-end;
    gap: 4px;
    padding: 12px 10px 13px;
}

.mde-actions button {
    display: grid;
    place-items: center;
    width: 17px;
    height: 16px;
}

.mde-status {
    display: flex;
    justify-content: space-between;
    height: 18px;
    padding: 4px 17px 0 1px;
}

.sliver {
    position: absolute;
    left: 62px;
    top: 73px;
    width: 5px;
    height: 34px;
    border-left: 1px solid #b9986c;
    background: #d8d0c0;
}

/* schematic editor */

.aether {
    left: 66px;
    right: 640px;
    top: 48px;
    bottom: 78px;
}

.aether .titlebar {
    justify-content: flex-start;
    padding-left: 326px;
    white-space: nowrap;
}

.aether .menubar {
    height: 18px;
    padding-left: 1px;
    white-space: nowrap;
}

.aether .menubar svg {
    margin-right: -3px;
}

.toolbar {
    display: flex;
    align-items: center;
    gap: 12px;
    height: 21px;
    flex: none;
    padding-left: 3px;
    border-bottom: 1px solid #c6c6c6;
    background: linear-gradient(#f0f0f0, #e8e8e8);
}

.toolbar .grip {
    margin-right: -11px;
}

.toolbar .wide {
    margin-left: 8px;
}

.devices .icons svg {
    height: 10px;
}

.schematic {
    flex: 1;
    width: 100%;
    min-height: 0;
    background: #000;
    font-family: Inter, sans-serif;
    font-size: 48px;
    font-weight: 100;
}

.cell {
    border: 1px solid #bdbdbd;
    height: 18px;
    line-height: 16px;
}

.cmd-row {
    display: flex;
    align-items: center;
    gap: 2px;
    flex: none;
    height: 33px;
    padding: 12px 0 0 3px;
    border-bottom: 1px solid #c6c6c6;
}

.cmd {
    width: 151px;
}

.info {
    width: 179px;
}

.coords {
    display: flex;
    flex: 1;
    gap: 8px;
}

.coords input {
    width: 60px;
    font-family: "DejaVu Sans Mono", monospace;
}

.state-row {
    display: flex;
    gap: 4px;
    flex: none;
    padding: 2px 1px 1px;
}

.state-row .cell {
    height: 15px;
    line-height: 14px;
    text-align: center;
}

.num {
    width: 14px;
}

.rest {
    flex: 1;
}

/* output setting */

.output {
    left: -114px;
    width: 548px;
    bottom: 120px;
    border-bottom: 1px solid #aaa;
}

.output .titlebar {
    position: relative;
    height: 25px;
}

.output .titlebar svg {
    position: absolute;
    right: 9px;
}

.output-body {
    display: flex;
    gap: 5px;
    height: 127px;
    padding: 3px 2px 1px 8px;
    border-bottom: 1px solid #ccc;
}

.output-form {
    flex: 1;
    display: flex;
    flex-direction: column;
    gap: 2px;
    min-width: 0;
    white-space: nowrap;
}

.output-form input {
    height: 18px;
    min-width: 0;
    border-color: #ccc #ddd #fff;
}

.form-line {
    display: flex;
    gap: 5px;
}

.form-line input {
    flex: 1;
}

.form-line.last {
    justify-content: flex-end;
    margin-top: auto;
}

.btn {
    height: 18px;
    overflow: hidden;
}

.signal {
    width: 40px;
}

.get {
    width: 86px;
    align-self: flex-end;
    margin-right: 32px;
}

.modify {
    width: 45px;
}

.new {
    display: flex;
    justify-content: center;
    width: 82px;
}

.output-list {
    display: flex;
    flex-direction: column;
    width: 321px;
    overflow: hidden;
    border: 1px solid #aaa;
    background: #f3f3f3;
}

.output-list table {
    width: 329px;
    table-layout: fixed;
    border-collapse: collapse;
}

.c-name { width: 68px; }
.c-type { width: 62px; }
.c-expr { width: 103px; }
.c-save { width: 51px; }
.c-plot { width: 45px; }

.output-list th {
    height: 16px;
    padding: 0;
    border: 1px solid #c4c4c4;
    border-top: 0;
    background: linear-gradient(#f2f2f2, #e2e2e2);
    font-weight: normal;
    line-height: 14px;
}

.output-list td {
    height: 20px;
    padding: 0 2px;
    border: 1px solid #c8c8c8;
}

.output-list th:first-child, .output-list td:first-child {
    border-left: 0;
}

input[type="checkbox"] {
    display: block;
    appearance: none;
    width: 10px;
    height: 10px;
    border: 1px solid #bbb;
    background: #fafafa;
}

input[type="checkbox"]:checked {
    background: #fafafa url("data:image/svg+xml,%3Csvg xmlns='http://www.w3.org/2000/svg' viewBox='0 0 8 8'%3E%3Cpath d='M1.500 4l2 2.500L6.500 1' fill='none' stroke='%23111' stroke-width='1.500'/%3E%3C/svg%3E");
}

.hscroll {
    display: flex;
    align-items: center;
    height: 9px;
    margin-top: auto;
    border-top: 1px solid #bbb;
    background: #dcdcdc;
    font-size: 8px;
    line-height: 8px;
}

.hscroll b, .vscroll b {
    display: grid;
    place-items: center;
    width: 9px;
    height: 8px;
    background: #efefef;
    color: #555;
    font-weight: normal;
}

.hscroll i {
    width: 240px;
    height: 8px;
    margin-right: auto;
    border-right: 1px solid #aaa;
    background: #f2f2f2;
}

.output-actions {
    display: flex;
    justify-content: flex-end;
    gap: 2px;
    padding: 3px 6px 2px;
}

.output-actions .btn {
    width: 54px;
    height: 19px;
}

/* iwave calculator */

.iwave {
    left: 448px;
    right: 93px;
    top: 20px;
    bottom: 24px;
}

.iwave .titlebar {
    position: relative;
    height: 25px;
    border-bottom-color: #aaa;
    background: #f6f6f6;
    color: #555;
}

.win-buttons {
    position: absolute;
    right: 9px;
    display: flex;
    gap: 17px;
}

.iwave .menubar {
    height: 16px;
    padding-left: 6px;
}

.bar {
    display: flex;
    align-items: center;
    flex: none;
    padding: 0 3px;
    border-bottom: 1px solid #c2c2c2;
    background: linear-gradient(#eee, #e7e7e7);
}

.bar-db {
    height: 33px;
}

.bar-db label {
    margin: 0 4px 0 8px;
}

.bar-db select {
    flex: 1;
    min-width: 0;
    height: 14px;
    margin-right: 7px;
    appearance: none;
    border: 1px solid #aaa;
    border-top-width: 2px;
    border-radius: 0;
    background: #f4f4f4 url("data:image/svg+xml,%3Csvg xmlns='http://www.w3.org/2000/svg' width='10' height='11'%3E%3Crect x='.5' y='.5' width='9' height='10' fill='%23eee' stroke='%23aaa'/%3E%3Cpath d='M2.500 4.500h5L5 7z' fill='%23444'/%3E%3C/svg%3E") no-repeat right center;
}

.bar-db .far {
    margin: 0 8px 0 42px;
}

.bar-math {
    height: 24px;
}

.bar-math .grip {
    margin-right: 8px;
}

.fns + .grip {
    margin-left: 16px;
}

.fns {
    display: flex;
    gap: 12px;
    white-space: nowrap;
}

.bar-db .fns {
    gap: 13px;
}

.more {
    width: 12px;
    margin-left: auto;
    color: #555;
    font-size: 10px;
    font-weight: normal;
    text-align: center;
}

.bar-db .more {
    margin-left: 4px;
}

.more.up {
    align-self: flex-start;
    padding-top: 4px;
}

.bar-mode {
    gap: 8px;
    height: 25px;
}

.bar-mode label {
    display: flex;
    align-items: center;
    gap: 4px;
}

.bar-mode .mode-icons {
    margin-left: -4px;
}

.bar-mode .grip:last-of-type {
    margin-right: -4px;
}

.bar-mode label:last-child {
    margin-right: 12px;
}

input[type="radio"] {
    appearance: none;
    width: 10px;
    height: 10px;
    border: 1px solid #b5b5b5;
    border-radius: 50%;
    background: #fafafa;
}

input[type="radio"]:checked {
    background: radial-gradient(circle, #333 2px, #fafafa 3px);
}

.mode-icons svg {
    width: 18px;
    height: 10px;
}

.grow {
    flex: 1;
}

.calc-main {
    display: flex;
    flex: none;
    padding-right: 6px;
}

.keypad {
    width: 134px;
}

.keys {
    display: grid;
    grid-template-columns: repeat(4, 1fr);
    gap: 4px;
    padding: 7px 6px 0;
}

.keys button {
    height: 15px;
    line-height: 12px;
}

.splitter {
    align-self: center;
    margin: 0 3px;
}

.editor {
    position: relative;
    flex: 1;
    padding-top: 6px;
}

.expression {
    height: 68px;
    padding: 2px 3px;
    border: 1px solid #bbb;
    background: #f3f3f3;
}

.fn {
    color: #2f8f2f;
}

.paren {
    background: #0a7d0a;
    color: #000;
}

.caret-end {
    border-right: 1px solid #111;
}

.ibeam {
    position: absolute;
    left: 114px;
    top: 31px;
}

.edit-icons {
    padding-top: 5px;
}

.edit-icons svg {
    width: 18px;
    height: 12px;
    margin-left: -1px;
    margin-right: 1px;
}

.stack-title {
    margin-top: 10px;
}

.stack {
    display: flex;
    flex: none;
    height: 73px;
    margin: 7px 6px 0 0;
}

.stack-icons {
    display: flex;
    flex-direction: column;
    justify-content: space-between;
    align-items: center;
    width: 24px;
    padding: 1px 0 2px;
}

.stack-icons svg {
    width: 12px;
    height: 10px;
}

.stack-list {
    flex: 1;
    background: #f3f3f3;
}

.fn-title {
    margin-top: 10px;
}

.fn-filter {
    display: flex;
    gap: 5px;
    flex: none;
    padding: 6px 6px 4px;
}

.combo {
    appearance: none;
    height: 19px;
    padding: 0 2px;
    background: url("data:image/svg+xml,%3Csvg xmlns='http://www.w3.org/2000/svg' width='6' height='4'%3E%3Cpath d='M0 0h6L3 4z' fill='%23555'/%3E%3C/svg%3E") no-repeat right 5px center, linear-gradient(#fcfcfc, #ebebeb);
}

.fn-filter .combo {
    width: 110px;
}

.fn-filter input {
    flex: 1;
    height: 19px;
}

.fn-panel {
    display: flex;
    flex: 1;
    min-height: 0;
    margin: 0 6px;
    border: 1px solid #b5b5b5;
    background: #f3f3f3;
}

.fn-scroll {
    flex: 1;
    overflow: hidden;
    padding-right: 39px;
}

.fn-scroll table {
    width: 100%;
    table-layout: fixed;
    border-collapse: collapse;
}

.fn-scroll tr {
    height: 21px;
}

.fn-scroll tr:nth-child(even) {
    height: 20px;
}

.fn-scroll td {
    padding: 0 2px;
    border-right: 1px solid #c6c6c6;
    border-bottom: 1px solid #c6c6c6;
    white-space: nowrap;
}

.vscroll {
    display: flex;
    flex-direction: column;
    width: 11px;
    border-left: 1px solid #bbb;
    background: #d9d9d9;
    font-size: 8px;
    line-height: 8px;
}

.vscroll b {
    width: 10px;
    height: 9px;
}

.vscroll i {
    height: 68px;
    margin-bottom: auto;
    border: 1px solid #bbb;
    border-width: 1px 0;
    background: #f2f2f2;
}

.tabs {
    display: flex;
    flex: none;
    margin-top: 7px;
    border-top: 1px solid #c9c9c9;
}

.tabs button {
    height: 18px;
    padding: 0 5px;
    border: 1px solid #c0c0c0;
    border-top: 0;
    border-radius: 0 0 2px 2px;
    background: #d6d6d6;
}

.tabs .active {
    height: 19px;
    padding: 0 5px 0 7px;
    border-left: 0;
    border-color: #d0d0d0;
    background: #e9e9e9;
}

.status-title {
    margin-top: 5px;
}

.status-area {
    flex: none;
    padding: 6px 6px 29px;
}

.status-area .combo {
    width: 100%;
}

/* host toolbar */

.vm-bar {
    position: absolute;
    left: 32px;
    right: 32px;
    top: 0;
    display: flex;
    align-items: center;
    height: 33px;
    padding: 0 7px 5px 2px;
    background: #fff;
    color: #555;
    font-family: "Open Sans", "Noto Sans CJK SC", sans-serif;
    font-size: 12px;
}

.tool {
    display: grid;
    place-items: center;
    width: 30px;
    height: 28px;
    flex: none;
    border: 0;
    background: none;
}

.tool.on {
    width: 26px;
    margin: 0 2px;
    border: 1px solid #e0e0e0;
    border-radius: 4px;
    background: #f4f4f4;
}

.vm-logo {
    width: 16px;
    height: 16px;
    margin: 0 2px;
}

.vm-name {
    display: flex;
    align-items: center;
    justify-content: space-between;
    width: 98px;
    flex: none;
    padding: 0 2px 0 7px;
    border: 0;
    background: none;
    color: #111;
}

.sep {
    width: 1px;
    height: 21px;
    margin: 0 6px;
    background: #ccc;
}

.drop {
    width: 16px;
    color: #888;
}

.drop svg {
    display: block;
    margin-left: 2px;
}

.faded {
    opacity: 0.45;
}

.vm-tabs {
    display: flex;
    align-self: flex-end;
    gap: 4px;
    margin-left: 2px;
}

.vm-tab {
    display: flex;
    align-items: center;
    gap: 5px;
    width: 77px;
    height: 24px;
    padding: 0 6px 0 5px;
    border: 1px solid #bbb;
    border-bottom: 0;
    border-radius: 4px 4px 0 0;
    background: #eef0f0;
    color: #111;
    white-space: nowrap;
}

.vm-tab.current {
    width: 109px;
    background: #fff;
    font-weight: bold;
}

.vm-tab:last-child {
    width: 116px;
}

.vm-tab .x {
    margin-left: auto;
    color: #bbb;
}

.vm-window {
    display: flex;
    gap: 11px;
    margin-left: auto;
}

.vm-window button {
    display: block;
    padding: 0;
    border: 0;
    background: none;
}

.vm-window svg {
    display: block;
}
```
